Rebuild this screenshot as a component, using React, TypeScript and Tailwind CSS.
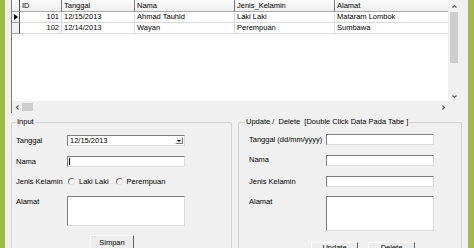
const rows = [
  { id: 101, tanggal: '12/15/2013', nama: 'Ahmad Tauhid', jk: 'Laki Laki', alamat: 'Mataram Lombok' },
  { id: 102, tanggal: '12/14/2013', nama: 'Wayan', jk: 'Perempuan', alamat: 'Sumbawa' },
];

const sunken = 'bg-white border border-t-[#7d7d7d] border-l-[#7d7d7d] border-r-[#dcdcdc] border-b-[#dcdcdc]';
const raised = 'bg-[#ececec] border border-t-white border-l-white border-r-[#5f5f5f] border-b-[#5f5f5f] flex items-center justify-center';

function Chevron({ dir }: { dir: 'up' | 'down' | 'left' | 'right' }) {
  const pts = {
    up: '0.5,3.5 2.5,1.5 4.5,3.5',
    down: '0.5,1.5 2.5,3.5 4.5,1.5',
    left: '3.5,0.5 1.5,2.5 3.5,4.5',
    right: '1.5,0.5 3.5,2.5 1.5,4.5',
  }[dir];
  return (
    <svg width="5" height="5" viewBox="0 0 5 5">
      <polyline points={pts} fill="none" stroke="#606060" strokeWidth="1.2" />
    </svg>
  );
}

function DataGrid() {
  const head = 'h-[12px] flex items-center px-[2px] border-r border-[#7a7a7a] border-b border-b-[#a8a8a8]';
  const cell = 'h-[11px] flex items-center px-[2px] border-r border-b border-[#dadada] whitespace-nowrap overflow-hidden';
  return (
    <div className="h-[113px] w-[449px] shrink-0 flex flex-col border-l border-[#7a7a7a] bg-white">
      <div className="flex flex-1">
        <div className="w-[436px] flex flex-col">
          <div className="flex bg-gradient-to-b from-[#fbfbfb] to-[#ececec]">
            <div className={`${head} w-[8px] px-0 border-r-[#4d4d4d]`} />
            <div className={`${head} w-[42px]`}>ID</div>
            <div className={`${head} w-[73px]`}>Tanggal</div>
            <div className={`${head} w-[100px]`}>Nama</div>
            <div className={`${head} w-[100px]`}>Jenis_Kelamin</div>
            <div className={`${head} w-[113px] border-r-0`}>Alamat</div>
          </div>
          {rows.map((r, i) => (
            <div key={r.id} className="flex">
              <div className="w-[8px] h-[11px] flex items-center justify-center bg-[#f0f0f0] border-r border-r-[#4d4d4d] border-b border-b-[#a8a8a8]">
                {i === 0 && (
                  <svg width="4" height="6" viewBox="0 0 4 6">
                    <polygon points="0,0 4,3 0,6" fill="#000" />
                  </svg>
                )}
              </div>
              <div className={`${cell} w-[42px] justify-end`}>{r.id}</div>
              <div className={`${cell} w-[73px]`}>{r.tanggal}</div>
              <div className={`${cell} w-[100px]`}>{r.nama}</div>
              <div className={`${cell} w-[100px]`}>{r.jk}</div>
              <div className={`${cell} w-[113px] border-r-0`}>{r.alamat}</div>
            </div>
          ))}
        </div>
        <div className="w-[12px] bg-[#f0f0f0] flex flex-col items-center">
          <div className="h-[12px] flex items-center justify-center">
            <Chevron dir="up" />
          </div>
          <div className="w-[8px] h-[51px] bg-[#cdcdcd]" />
          <div className="flex-1" />
          <div className="h-[10px] flex items-center justify-center">
            <Chevron dir="down" />
          </div>
        </div>
      </div>
      <div className="h-[12px] flex bg-[#f0f0f0]">
        <div className="w-[436px] flex items-center">
          <div className="w-[10px] flex justify-center">
            <Chevron dir="left" />
          </div>
          <div className="w-[11px] h-[8px] bg-[#cdcdcd]" />
          <div className="flex-1" />
          <div className="w-[10px] flex justify-center">
            <Chevron dir="right" />
          </div>
        </div>
        <div className="w-[12px]" />
      </div>
    </div>
  );
}

function Radio({ label }: { label: string }) {
  return (
    <div className="flex items-center gap-[4px]">
      <span className="w-[7px] h-[7px] rounded-full bg-white border border-t-[#6f6f6f] border-l-[#6f6f6f] border-r-[#e0e0e0] border-b-[#e0e0e0]" />
      <span>{label}</span>
    </div>
  );
}

function InputGroup() {
  return (
    <fieldset className="w-[221px] shrink-0 h-[140px] border border-[#d3d3d3] rounded-[2px] pl-[4px] flex flex-col">
      <legend className="px-[1px] leading-[8px]">Input</legend>
      <div className="flex items-center mt-[9px]">
        <div className="w-[51px]">Tanggal</div>
        <div className={`${sunken} w-[118px] h-[11px] flex items-center justify-between pl-[2px] pr-[1px]`}>
          <span>12/15/2013</span>
          <span className="w-[8px] h-[7px] bg-[#f0f0f0] border border-t-white border-l-white border-r-[#7a7a7a] border-b-[#7a7a7a] flex items-center justify-center">
            <svg width="4" height="2" viewBox="0 0 4 2">
              <polygon points="0,0 4,0 2,2" fill="#000" />
            </svg>
          </span>
        </div>
      </div>
      <div className="flex items-center mt-[10px]">
        <div className="w-[51px]">Nama</div>
        <div className={`${sunken} w-[118px] h-[11px] flex items-center pl-[1px]`}>
          <span className="w-[1px] h-[7px] bg-black" />
        </div>
      </div>
      <div className="flex items-center h-[11px] mt-[9px]">
        <div className="w-[52px]">Jenis Kelamin</div>
        <div className="flex items-center gap-[7px]">
          <Radio label="Laki Laki" />
          <Radio label="Perempuan" />
        </div>
      </div>
      <div className="flex items-start mt-[9px]">
        <div className="w-[51px] pt-[2px]">Alamat</div>
        <div className={`${sunken} w-[118px] h-[30px]`} />
      </div>
      <div className="mt-[9px] ml-[74px]">
        <button className={`${raised} w-[44px] h-[15px] text-[7.5px]`}>Simpan</button>
      </div>
    </fieldset>
  );
}

function UpdateGroup() {
  const box = `${sunken} w-[108px] h-[11px]`;
  return (
    <fieldset className="w-[224px] shrink-0 h-[140px] border border-[#d3d3d3] rounded-[2px] pl-[6px] flex flex-col">
      <legend className="px-[1px] leading-[8px] whitespace-pre">Update /  Delete  [Double Click Data Pada Tabe ]</legend>
      <div className="pl-[4px] flex flex-col">
        <div className="flex items-center mt-[8px]">
          <div className="w-[77px]">Tanggal (dd/mm/yyyy)</div>
          <div className={box} />
        </div>
        <div className="flex items-center mt-[10px]">
          <div className="w-[77px] -mt-[2px]">Nama</div>
          <div className={box} />
        </div>
        <div className="flex items-center mt-[10px]">
          <div className="w-[77px]">Jenis Kelamin</div>
          <div className={box} />
        </div>
        <div className="flex items-start mt-[9px]">
          <div className="w-[77px] pt-[2px]">Alamat</div>
          <div className={`${sunken} w-[108px] h-[35px]`} />
        </div>
        <div className="flex gap-[10px] mt-[11px] ml-[62px]">
          <button className={`${raised} w-[47px] h-[12px] text-[7.5px]`}>Update</button>
          <button className={`${raised} w-[47px] h-[12px] text-[7.5px]`}>Delete</button>
        </div>
      </div>
    </fieldset>
  );
}

export default function App() {
  return (
    <div className="w-[474px] h-[248px] overflow-hidden bg-[#f0f0f0] flex text-[7.5px] leading-none text-black font-['Liberation_Sans',Arial,sans-serif]">
      <div className="w-[5px] shrink-0 bg-[#a0bb45]" />
      <div className="w-[463px] shrink-0 flex flex-col pl-[6px]">
        <DataGrid />
        <div className="flex shrink-0 gap-[6px] mt-[5px]">
          <InputGroup />
          <UpdateGroup />
        </div>
      </div>
      <div className="w-[6px] shrink-0 bg-[#a0bb45]" />
    </div>
  );
}
